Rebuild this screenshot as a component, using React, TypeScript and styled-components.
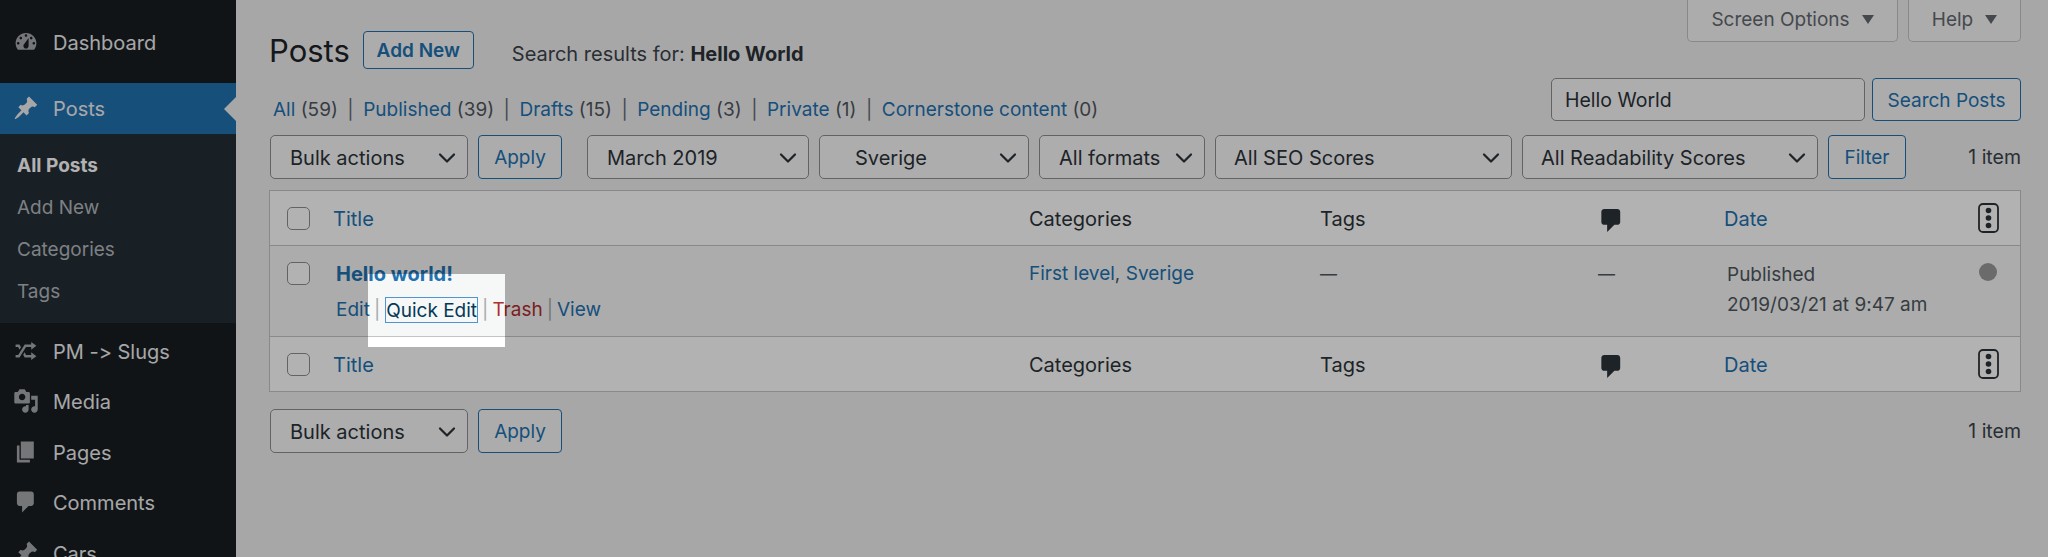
import styled, { createGlobalStyle } from 'styled-components';
import { ChevronDown } from 'lucide-react';

const GlobalStyle = createGlobalStyle`
  html, body {
    margin: 0;
    height: 557px;
    overflow: hidden;
    background: #f0f0f1;
    font-family: Inter, "Liberation Sans", sans-serif;
    font-size: 19px;
    font-variant-ligatures: none;
    font-feature-settings: "calt" 0, "liga" 0;
    color: #1d2327;
  }
`;

const COLUMNS = '63px 696px 291px 278px 126px 254px 1fr';

const Page = styled.div`
  position: relative;
  display: flex;
  width: 2048px;
  height: 557px;
  overflow: hidden;
`;

const Sidebar = styled.nav`
  width: 236px;
  flex-shrink: 0;
  background: #171d21;
  padding-top: 17px;
  display: flex;
  flex-direction: column;
`;

const MenuItem = styled.div<{ $active?: boolean; $gap?: boolean }>`
  position: relative;
  height: 50.5px;
  flex-shrink: 0;
  display: flex;
  align-items: center;
  gap: 14px;
  padding-left: 13px;
  color: #f0f0f1;
  font-size: 20px;
  margin-bottom: ${p => (p.$gap ? '15.5px' : '0')};
  background: ${p => (p.$active ? '#2271b1' : 'transparent')};
  svg {
    fill: ${p => (p.$active ? '#f0f0f1' : '#a7aaad')};
  }
  ${p => p.$active && `
    &::after {
      content: '';
      position: absolute;
      right: 0;
      top: 14px;
      border: 12px solid transparent;
      border-left: 0;
      border-right-color: #f0f0f1;
    }
  `};
`;

const MenuLabel = styled.span`
  padding-top: 2px;
`;

const SubMenu = styled.div`
  background: #252e35;
  height: 189.5px;
  flex-shrink: 0;
  margin-bottom: 2.5px;
  padding-top: 11px;
  box-sizing: border-box;
  display: flex;
  flex-direction: column;
`;

const SubItem = styled.div<{ $current?: boolean }>`
  height: 42px;
  display: flex;
  align-items: center;
  padding-left: 17px;
  font-size: 19px;
  font-weight: ${p => (p.$current ? 700 : 400)};
  color: ${p => (p.$current ? '#fff' : '#b4b9be')};
`;

const Main = styled.main`
  flex: 1;
  min-width: 0;
  padding: 0 27px 0 34px;
  display: flex;
  flex-direction: column;
`;

const TopRow = styled.div`
  height: 78px;
  display: flex;
  justify-content: space-between;
  align-items: flex-start;
`;

const Heading = styled.div`
  display: flex;
  align-items: center;
  padding-top: 31px;
`;

const Title = styled.h1`
  margin: 0 13px 0 -1px;
  font-size: 31px;
  font-weight: 400;
  line-height: 37px;
`;

const SearchNote = styled.span`
  margin-left: 38px;
  margin-top: 8px;
  font-size: 20px;
  color: #3c434a;
  b {
    color: #2c3338;
  }
`;

const Tabs = styled.div`
  display: flex;
  gap: 10px;
`;

const Tab = styled.div<{ $w: number }>`
  width: ${p => p.$w}px;
  height: 42px;
  box-sizing: border-box;
  display: flex;
  align-items: center;
  justify-content: center;
  gap: 12px;
  border: 1.5px solid #c3c4c7;
  border-top: 0;
  border-radius: 0 0 5px 5px;
  background: #f6f7f7;
  color: #646970;
  font-size: 19px;
  padding-bottom: 2px;
  &::after {
    content: '';
    border: 6px solid transparent;
    border-top: 9px solid #646970;
    border-bottom: 0;
  }
`;

const SearchRow = styled.div`
  height: 43px;
  display: flex;
  justify-content: space-between;
  align-items: flex-start;
`;

const Views = styled.div`
  display: flex;
  align-items: center;
  gap: 9.5px;
  padding: 21px 0 0 3px;
  font-size: 19px;
  line-height: 22px;
  color: #50575e;
`;

const Sep = styled.span`
  color: #646970;
`;

const Link = styled.a`
  color: #2271b1;
`;

const SearchBox = styled.div`
  display: flex;
  gap: 7px;
`;

const SearchInput = styled.div`
  width: 314px;
  height: 43px;
  box-sizing: border-box;
  display: flex;
  align-items: center;
  padding: 1px 0 0 13px;
  border: 1.5px solid #8c8f94;
  border-radius: 5px;
  background: #f8f8f8;
  font-size: 19.5px;
  color: #2c3338;
`;

const Button = styled.div<{ $w: number; $h?: number; $strong?: boolean; $after?: number }>`
  width: ${p => p.$w}px;
  height: ${p => p.$h ?? 44}px;
  flex-shrink: 0;
  box-sizing: border-box;
  margin-right: ${p => p.$after ?? 0}px;
  display: flex;
  align-items: center;
  justify-content: center;
  padding-top: 1px;
  border: 1.5px solid #2271b1;
  border-radius: 4px;
  background: #f6f7f7;
  color: #2271b1;
  font-size: 19px;
  font-weight: ${p => (p.$strong ? 600 : 400)};
`;

const TableNav = styled.div<{ $top?: number }>`
  height: 44px;
  margin-top: ${p => p.$top ?? 0}px;
  display: flex;
  align-items: center;
`;

const Select = styled.div<{ $w: number; $indent?: number }>`
  width: ${p => p.$w}px;
  height: 44px;
  flex-shrink: 0;
  box-sizing: border-box;
  margin-right: 10px;
  display: flex;
  align-items: center;
  justify-content: space-between;
  padding: 2px 6px 0 ${p => p.$indent ?? 19}px;
  border: 1.5px solid #8c8f94;
  border-radius: 5px;
  background: #f8f8f8;
  font-size: 20px;
  color: #2c3338;
  white-space: nowrap;
`;

const ItemCount = styled.span`
  margin-left: auto;
  font-size: 19.5px;
  color: #3c434a;
`;

const Table = styled.div`
  margin: 11px 0 0 -1px;
  border: 1.5px solid #c3c4c7;
  background: #fff;
`;

const Row = styled.div<{ $body?: boolean; $bottom?: boolean }>`
  display: grid;
  grid-template-columns: ${COLUMNS};
  height: ${p => (p.$body ? '90px' : '54px')};
  align-items: ${p => (p.$body ? 'start' : 'center')};
  background: ${p => (p.$body ? '#f6f7f7' : '#fff')};
  border-bottom: ${p => (p.$bottom ? '1.5px solid #c3c4c7' : '0')};
  font-size: 20px;
  color: #2c3338;
`;

const HeadText = styled.span`
  padding-top: 2px;
`;

const HeadLink = styled(Link)`
  padding-top: 2px;
`;

const CheckCell = styled.div<{ $body?: boolean }>`
  padding: ${p => (p.$body ? '16px 0 0 17px' : '0 0 0 17px')};
`;

const Checkbox = styled.div`
  width: 23px;
  height: 23px;
  box-sizing: border-box;
  border: 1.5px solid #8c8f94;
  border-radius: 5px;
  background: #fff;
`;

const BodyCell = styled.div<{ $left?: number; $top?: number }>`
  padding: ${p => p.$top ?? 14}px 0 0 ${p => p.$left ?? 0}px;
  font-size: 19px;
  line-height: 30px;
  color: #50575e;
`;

const RowTitle = styled.a`
  display: block;
  color: #2271b1;
  font-size: 20px;
  font-weight: 700;
  line-height: 24px;
  margin-top: 2px;
`;

const RowActions = styled.div`
  display: flex;
  align-items: center;
  gap: 4px;
  margin-top: 11px;
  font-size: 19px;
  line-height: 24px;
  color: #a7aaad;
`;

const FocusLink = styled.a`
  box-sizing: border-box;
  height: 26px;
  display: flex;
  align-items: center;
  padding: 1px 0 0;
  margin-left: 1px;
  border: 1.5px solid #4f94d4;
  color: #043959;
`;

const TrashLink = styled.a`
  color: #b32d2e;
`;

const DashCell = styled.div`
  padding-top: 18px;
  font-size: 17px;
  color: #50575e;
`;

const CommentCell = styled.div`
  display: flex;
  padding-top: 4px;
  margin-left: -1px;
  svg {
    display: block;
    fill: #2c3338;
  }
`;

const IconSvg = styled.svg`
  flex-shrink: 0;
`;

const SeoSvg = styled.svg`
  display: block;
  fill: #2c3338;
`;

const Dot = styled.div`
  margin: 17px 0 0 1px;
  width: 18px;
  height: 18px;
  border-radius: 50%;
  background: #9a9a9a;
`;

const Spotlight = styled.div`
  position: absolute;
  left: 368px;
  top: 274px;
  width: 137px;
  height: 73px;
  box-shadow: 0 0 0 3000px rgba(0, 0, 0, 0.3);
  pointer-events: none;
`;

const ICONS = {
  dashboard:
    'M3.76 16h12.48c1.1-1.37 1.76-3.11 1.76-5 0-4.42-3.58-8-8-8s-8 3.58-8 8c0 1.89.66 3.63 1.76 5zM10 4c.55 0 1 .45 1 1s-.45 1-1 1-1-.45-1-1 .45-1 1-1zM6 6c.55 0 1 .45 1 1s-.45 1-1 1-1-.45-1-1 .45-1 1-1zm8 0c.55 0 1 .45 1 1s-.45 1-1 1-1-.45-1-1 .45-1 1-1zm-5.37 5.55L12 7v6c0 1.1-.9 2-2 2s-2-.9-2-2c0-.57.24-1.08.63-1.45zM4 10c.55 0 1 .45 1 1s-.45 1-1 1-1-.45-1-1 .45-1 1-1zm12 0c.55 0 1 .45 1 1s-.45 1-1 1-1-.45-1-1 .45-1 1-1z',
  pin: 'M10.44 3.02l1.82-1.82 6.36 6.35-1.83 1.82c-1.05-.68-2.48-.57-3.41.36l-.75.75c-.92.93-1.04 2.35-.35 3.41l-1.83 1.82-2.41-2.41-2.8 2.79c-.42.42-3.38 2.71-3.8 2.29s1.86-3.39 2.28-3.81l2.79-2.79L4.1 9.36l1.83-1.82c1.05.69 2.48.57 3.4-.36l.75-.75c.93-.92 1.05-2.35.36-3.41z',
  shuffle:
    'M18 6.01L14 9V7h-4l-5 8H2v-2h2l5-8h5V3zM2 5h3l1.15 2.17-1.12 1.8L4 7H2V5zm16 9.01L14 17v-2H9l-1.15-2.17 1.12-1.8L10 13h4v-2z',
  media:
    'M13 11V4c0-.55-.45-1-1-1h-1.67L9 1H5L3.67 3H2c-.55 0-1 .45-1 1v7c0 .55.45 1 1 1h10c.55 0 1-.45 1-1zM7 4.5c1.38 0 2.5 1.12 2.5 2.5S8.38 9.5 7 9.5 4.5 8.38 4.5 7 5.62 4.5 7 4.5zM14 6h5v10.5c0 1.38-1.12 2.5-2.5 2.5S14 17.88 14 16.5s1.12-2.5 2.5-2.5c.17 0 .34.02.5.05V9h-3V6zm-4 8.05V13h2v3.5c0 1.38-1.12 2.5-2.5 2.5S7 17.88 7 16.5 8.12 14 9.5 14c.17 0 .34.02.5.05z',
  pages: 'M6 15V2h10v13H6zm-1 1h8v2H3V5h2v11z',
  comment:
    'M5 2h9c1.1 0 2 .9 2 2v7c0 1.1-.9 2-2 2h-2l-5 5v-5H5c-1.1 0-2-.9-2-2V4c0-1.1.9-2 2-2z',
};

function DashIcon({ name, size = 26 }: { name: keyof typeof ICONS; size?: number }) {
  return (
    <IconSvg width={size} height={size} viewBox="0 0 20 20" fillRule="evenodd">
      <path d={ICONS[name]} />
    </IconSvg>
  );
}

function SeoIcon() {
  return (
    <SeoSvg width="21" height="30" viewBox="0 0 21 30">
      <rect x="1" y="1" width="19" height="28" rx="4" fill="none" stroke="#2c3338" strokeWidth="1.8" />
      <circle cx="10.5" cy="7.5" r="2.8" />
      <circle cx="10.5" cy="15" r="2.8" />
      <circle cx="10.5" cy="22.5" r="2.8" />
    </SeoSvg>
  );
}

function HeadRow({ bottom }: { bottom?: boolean }) {
  return (
    <Row $bottom={bottom}>
      <CheckCell>
        <Checkbox />
      </CheckCell>
      <HeadLink>Title</HeadLink>
      <HeadText>Categories</HeadText>
      <HeadText>Tags</HeadText>
      <CommentCell>
        <DashIcon name="comment" size={29} />
      </CommentCell>
      <HeadLink>Date</HeadLink>
      <SeoIcon />
    </Row>
  );
}

function Chevron() {
  return <ChevronDown size={28} strokeWidth={1.9} color="#2c3338" />;
}

function App() {
  return (
    <Page>
      <GlobalStyle />
      <Sidebar>
        <MenuItem $gap>
          <DashIcon name="dashboard" />
          <MenuLabel>Dashboard</MenuLabel>
        </MenuItem>
        <MenuItem $active>
          <DashIcon name="pin" />
          <MenuLabel>Posts</MenuLabel>
        </MenuItem>
        <SubMenu>
          <SubItem $current>All Posts</SubItem>
          <SubItem>Add New</SubItem>
          <SubItem>Categories</SubItem>
          <SubItem>Tags</SubItem>
        </SubMenu>
        <MenuItem>
          <DashIcon name="shuffle" />
          <MenuLabel>PM -&gt; Slugs</MenuLabel>
        </MenuItem>
        <MenuItem>
          <DashIcon name="media" />
          <MenuLabel>Media</MenuLabel>
        </MenuItem>
        <MenuItem>
          <DashIcon name="pages" />
          <MenuLabel>Pages</MenuLabel>
        </MenuItem>
        <MenuItem>
          <DashIcon name="comment" />
          <MenuLabel>Comments</MenuLabel>
        </MenuItem>
        <MenuItem>
          <DashIcon name="pin" />
          <MenuLabel>Cars</MenuLabel>
        </MenuItem>
      </Sidebar>

      <Main>
        <TopRow>
          <Heading>
            <Title>Posts</Title>
            <Button $w={111} $h={38} $strong>
              Add New
            </Button>
            <SearchNote>
              Search results for: <b>Hello World</b>
            </SearchNote>
          </Heading>
          <Tabs>
            <Tab $w={211}>Screen Options</Tab>
            <Tab $w={113}>Help</Tab>
          </Tabs>
        </TopRow>

        <SearchRow>
          <Views>
            <span>
              <Link>All</Link> (59)
            </span>
            <Sep>|</Sep>
            <span>
              <Link>Published</Link> (39)
            </span>
            <Sep>|</Sep>
            <span>
              <Link>Drafts</Link> (15)
            </span>
            <Sep>|</Sep>
            <span>
              <Link>Pending</Link> (3)
            </span>
            <Sep>|</Sep>
            <span>
              <Link>Private</Link> (1)
            </span>
            <Sep>|</Sep>
            <span>
              <Link>Cornerstone content</Link> (0)
            </span>
          </Views>
          <SearchBox>
            <SearchInput>Hello World</SearchInput>
            <Button $w={149} $h={43}>
              Search Posts
            </Button>
          </SearchBox>
        </SearchRow>

        <TableNav $top={14}>
          <Select $w={198}>
            Bulk actions
            <Chevron />
          </Select>
          <Button $w={84} $after={25}>
            Apply
          </Button>
          <Select $w={222}>
            March 2019
            <Chevron />
          </Select>
          <Select $w={210} $indent={35}>
            Sverige
            <Chevron />
          </Select>
          <Select $w={166}>
            All formats
            <Chevron />
          </Select>
          <Select $w={297} $indent={18}>
            All SEO Scores
            <Chevron />
          </Select>
          <Select $w={296} $indent={18}>
            All Readability Scores
            <Chevron />
          </Select>
          <Button $w={78}>Filter</Button>
          <ItemCount>1 item</ItemCount>
        </TableNav>

        <Table>
          <HeadRow bottom />
          <Row $body $bottom>
            <CheckCell $body>
              <Checkbox />
            </CheckCell>
            <BodyCell $left={3}>
              <RowTitle>Hello world!</RowTitle>
              <RowActions>
                <Link>Edit</Link>
                <span>|</span>
                <FocusLink>Quick Edit</FocusLink>
                <span>|</span>
                <TrashLink>Trash</TrashLink>
                <span>|</span>
                <Link>View</Link>
              </RowActions>
            </BodyCell>
            <BodyCell $top={13}>
              <Link>First level</Link>, <Link>Sverige</Link>
            </BodyCell>
            <DashCell>—</DashCell>
            <DashCell>—</DashCell>
            <BodyCell $left={3} $top={14}>
              Published
              <br />
              2019/03/21 at 9:47 am
            </BodyCell>
            <Dot />
          </Row>
          <HeadRow />
        </Table>

        <TableNav $top={17}>
          <Select $w={198}>
            Bulk actions
            <Chevron />
          </Select>
          <Button $w={84}>Apply</Button>
          <ItemCount>1 item</ItemCount>
        </TableNav>
      </Main>

      <Spotlight />
    </Page>
  );
}

export default App;
